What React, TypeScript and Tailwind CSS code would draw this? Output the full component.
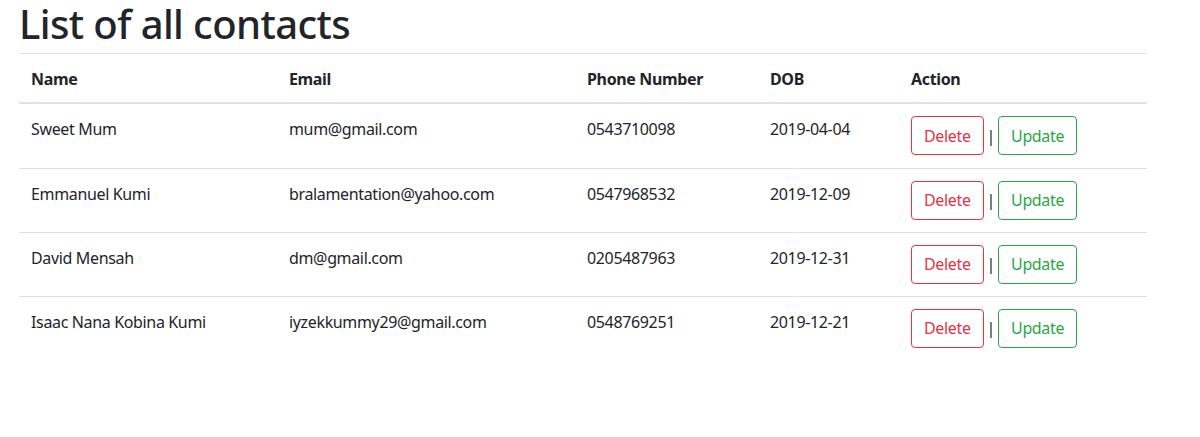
const contacts = [
  { name: "Sweet Mum", email: "mum@gmail.com", phone: "0543710098", dob: "2019-04-04" },
  { name: "Emmanuel Kumi", email: "bralamentation@yahoo.com", phone: "0547968532", dob: "2019-12-09" },
  { name: "David Mensah", email: "dm@gmail.com", phone: "0205487963", dob: "2019-12-31" },
  { name: "Isaac Nana Kobina Kumi", email: "iyzekkummy29@gmail.com", phone: "0548769251", dob: "2019-12-21" },
];

const font = { fontFamily: '"Noto Sans", "Open Sans", sans-serif' };

export default function App() {
  return (
    <div className="min-h-[437px] bg-white text-[#212529] tracking-[-0.35px]" style={font}>
      <div className="w-[1128px] ml-[19px]">
        <h1 className="text-[40px] font-medium leading-[48px] mb-[5px] tracking-[-0.6px]">List of all contacts</h1>
        <table className="w-full table-fixed border-collapse text-base">
          <thead>
            <tr className="border-t border-[#dee2e6] border-b-2">
              <th className="w-[258px] px-3 pt-[13px] pb-[11px] text-left font-bold leading-6">Name</th>
              <th className="w-[298px] px-3 pt-[13px] pb-[11px] text-left font-bold leading-6">Email</th>
              <th className="w-[183px] px-3 pt-[13px] pb-[11px] text-left font-bold leading-6">Phone Number</th>
              <th className="w-[141px] px-3 pt-[13px] pb-[11px] text-left font-bold leading-6">DOB</th>
              <th className="px-3 pt-[13px] pb-[11px] text-left font-bold leading-6">Action</th>
            </tr>
          </thead>
          <tbody>
            {contacts.map((c, i) => (
              <tr key={c.email} className={i > 0 ? "border-t border-[#dee2e6]" : "h-[65px]"}>
                <td className="px-3 pt-[13px] pb-3 align-top leading-6">{c.name}</td>
                <td className="px-3 pt-[13px] pb-3 align-top leading-6">{c.email}</td>
                <td className="px-3 pt-[13px] pb-3 align-top leading-6">{c.phone}</td>
                <td className="px-3 pt-[13px] pb-3 align-top leading-6">{c.dob}</td>
                <td className="px-3 pt-3 pb-3 align-top leading-6">
                  <div className="flex items-center">
                    <button className="h-[39px] px-3 border border-[#dc3545] rounded text-[#dc3545] leading-6">Delete</button>
                    <span className="mx-[3px] text-[#212529]">|</span>
                    <button className="h-[39px] px-3 border border-[#28a745] rounded text-[#28a745] leading-6">Update</button>
                  </div>
                </td>
              </tr>
            ))}
          </tbody>
        </table>
      </div>
    </div>
  );
}
